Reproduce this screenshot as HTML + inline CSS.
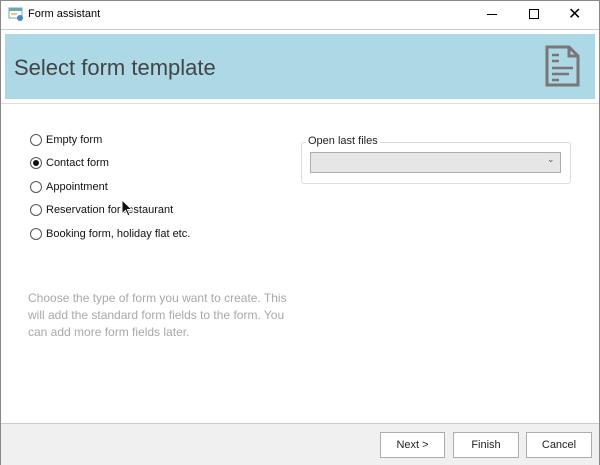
<!DOCTYPE html>
<html><head><style>
body{margin:0;width:600px;height:465px;position:relative;background:#fff;font-family:"Liberation Sans",sans-serif;overflow:hidden}
.a{position:absolute}
.r{position:absolute;left:30px;width:10px;height:10px;border:1px solid #555;border-radius:50%;background:#fff}
.t{position:absolute;left:46px;font-size:11px;color:#111}
.btn{position:absolute;top:432px;height:24px;border:1px solid #adadad;background:#fff;font-size:11px;color:#222;text-align:center;line-height:24px}
</style></head><body>
<div class="a" style="left:0;top:0;width:598px;height:463px;border:1px solid #888"></div>
<svg class="a" style="left:8px;top:7px" width="16" height="14"><rect x="1" y="1" width="13" height="10" fill="#fff" stroke="#7aa"/><rect x="1" y="1" width="13" height="3" fill="#6ab"/><line x1="3" y1="7" x2="9" y2="7" stroke="#e80"/><circle cx="12" cy="11" r="3" fill="#3a8ad8"/></svg>
<div class="a" style="left:28px;top:8px;font-size:11px;color:#000">Form assistant</div>
<div class="a" style="left:487px;top:14px;width:10px;height:1px;background:#000"></div>
<div class="a" style="left:529px;top:9px;width:8px;height:8px;border:1px solid #000"></div>
<div class="a" style="left:568px;top:4px;font-size:16px;color:#000">✕</div>
<div class="a" style="left:1px;top:29px;width:598px;height:1px;background:#ccc"></div>
<div class="a" style="left:5px;top:34px;width:590px;height:65px;background:#add8e6"></div>
<div class="a" style="left:14px;top:55px;font-size:22px;color:#444">Select form template</div>
<svg class="a" style="left:545px;top:45px" width="36" height="42"><path d="M2 2H24L33 11V40H2Z M24 2V11H33" fill="none" stroke="#777" stroke-width="3"/><path d="M7 10H14M7 16H14M7 23H28M7 29H24M7 35H14" stroke="#777" stroke-width="2.5"/></svg>
<div class="a" style="left:1px;top:103px;width:598px;height:1px;background:#ddd"></div>
<div class="r" style="top:134px"></div><div class="t" style="top:134px">Empty form</div>
<div class="r" style="top:157px"></div><div class="a" style="left:33px;top:160px;width:6px;height:6px;border-radius:50%;background:#111"></div><div class="t" style="top:157px">Contact form</div>
<div class="r" style="top:181px"></div><div class="t" style="top:181px">Appointment</div>
<div class="r" style="top:204px"></div><div class="t" style="top:204px">Reservation for restaurant</div>
<div class="r" style="top:228px"></div><div class="t" style="top:228px">Booking form, holiday flat etc.</div>
<svg class="a" style="left:121px;top:199px" width="12" height="18"><path d="M1 1V15L4.5 11.5L7 17L9 16L6.5 10.5H11Z" fill="#111" stroke="#fff" stroke-width="1"/></svg>
<div class="a" style="left:28px;top:290px;font-size:12px;line-height:17px;color:#a8a8a8;width:270px">Choose the type of form you want to create. This will add the standard form fields to the form. You can add more form fields later.</div>
<div class="a" style="left:301px;top:142px;width:268px;height:40px;border:1px solid #dcdcdc;border-radius:3px"></div>
<div class="a" style="left:306px;top:135px;background:#fff;padding:0 2px;font-size:11px;color:#222">Open last files</div>
<div class="a" style="left:310px;top:152px;width:249px;height:19px;border:1px solid #adadad;background:#e6e6e6"></div>
<div class="a" style="left:547px;top:154px;font-size:9px;color:#555">⌄</div>
<div class="a" style="left:1px;top:423px;width:598px;height:41px;background:#f0f0f0;border-top:1px solid #ccc"></div>
<div class="btn" style="left:380px;width:63px">Next &gt;</div>
<div class="btn" style="left:453px;width:64px">Finish</div>
<div class="btn" style="left:526px;width:64px">Cancel</div>
</body></html>
